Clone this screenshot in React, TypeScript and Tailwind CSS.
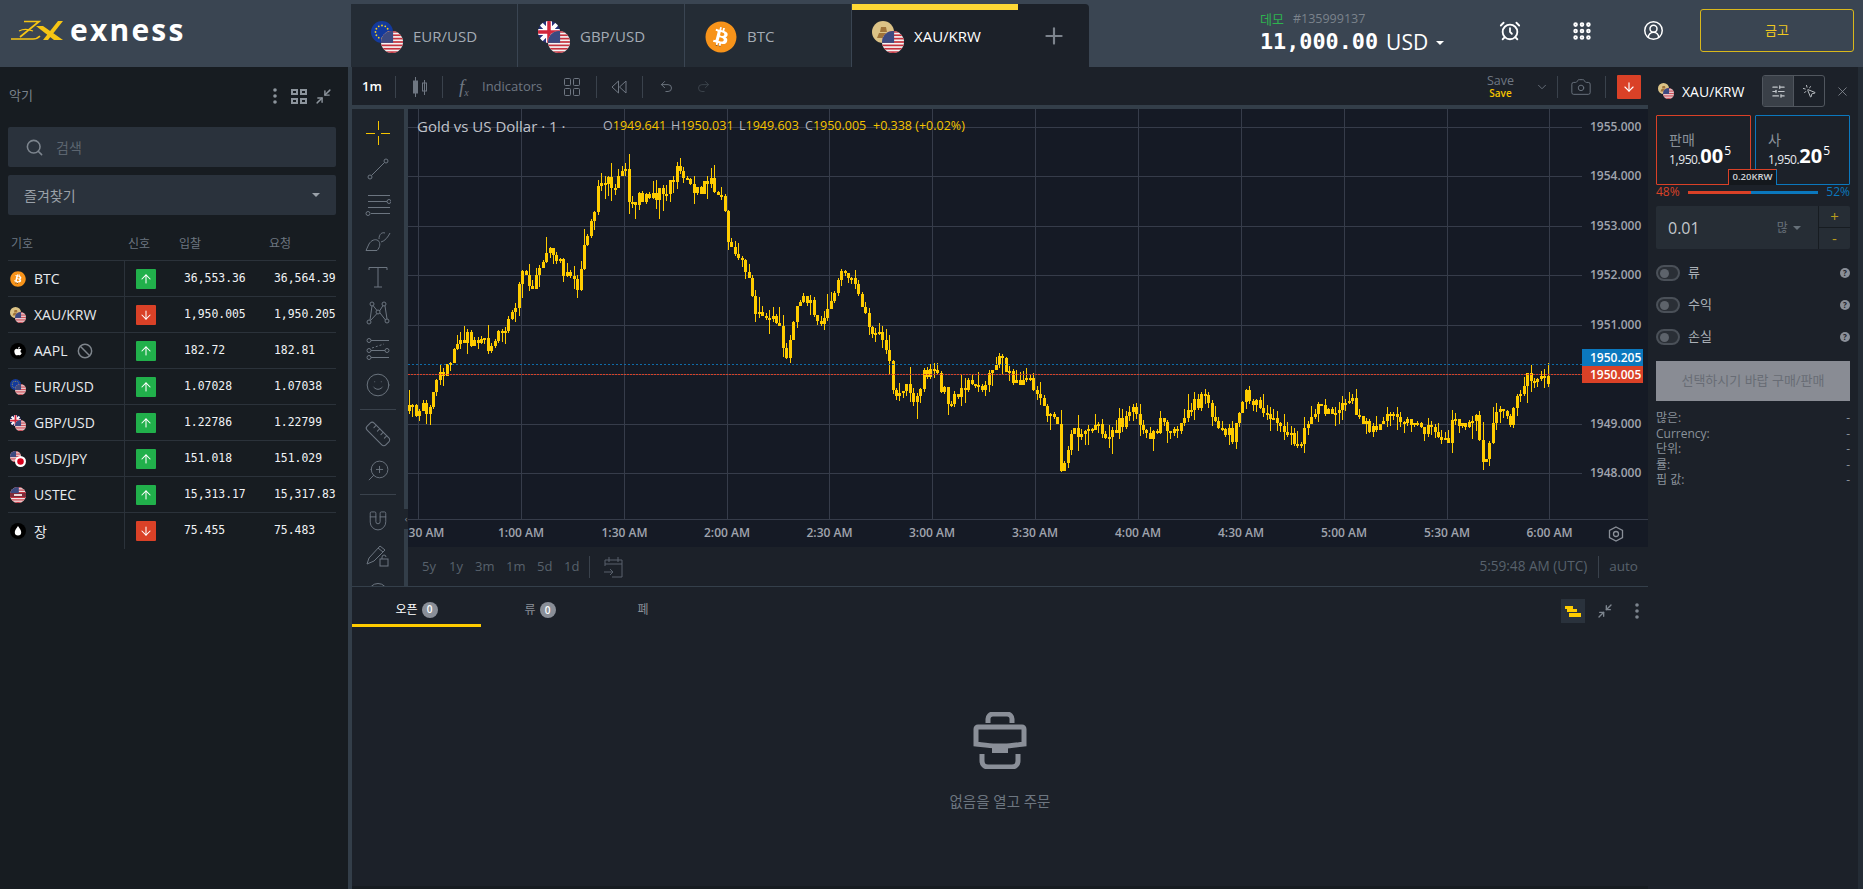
import React, { useId } from 'react';
import {
  AlarmClock, ArrowDown, ArrowUp, Ban, Camera, ChevronDown, CircleUserRound, Grip, Magnet, Minimize2,
  MousePointerClick, Plus, Redo2, Ruler, Search, SlidersHorizontal, Smile, Undo2, X, ZoomIn,
} from 'lucide-react';
import { FaApple, FaBitcoin } from 'react-icons/fa';

// candle path read off the picture, in page pixels
const toPage = (ox: number, oy: number, pts: number[][]) => pts.map(([x, y]) => [ox + x / 3, oy + y / 3]);
const waypoints = [
  ...toPage(350, 100, [
    [175, 935], [240, 925], [258, 850], [300, 790], [330, 710], [400, 730], [430, 755], [450, 690], [490, 650],
    [515, 490], [540, 570], [575, 490], [600, 450], [640, 510], [680, 570], [700, 460], [730, 350], [750, 235],
    [800, 250], [825, 210], [830, 300], [880, 290], [940, 280], [980, 210], [1040, 280], [1075, 230], [1110, 290],
    [1130, 340], [1130, 410], [1165, 470], [1200, 560], [1220, 650], [1270, 640], [1310, 760], [1330, 650],
    [1350, 610], [1380, 600], [1400, 670], [1440, 620], [1470, 530],
  ]),
  ...toPage(840, 100, [
    [10, 510], [40, 530], [60, 600], [90, 680], [130, 710], [150, 780], [160, 900], [200, 870], [230, 900],
    [250, 820], [290, 830], [330, 920], [380, 850], [420, 880], [450, 820], [480, 770], [510, 830], [570, 850],
    [600, 910], [650, 960], [660, 1140], [690, 1010], [750, 970], [810, 1010], [830, 980], [880, 940], [930, 1000],
    [960, 970], [1000, 1000], [1030, 940], [1095, 890], [1130, 980], [1180, 1010], [1210, 880], [1250, 900],
    [1290, 950], [1330, 980], [1380, 1030], [1410, 930],
  ]),
  ...toPage(1300, 340, [
    [20, 220], [50, 200], [90, 220], [150, 170], [170, 240], [220, 270], [280, 220], [330, 260], [400, 270],
    [445, 320], [460, 230], [500, 270], [530, 240], [550, 385], [565, 300], [600, 200], [630, 260], [660, 150],
    [680, 100], [700, 140], [740, 115],
  ]),
];

const lineAt = (x: number) => {
  for (let i = 1; i < waypoints.length; i++) {
    const [x0, y0] = waypoints[i - 1];
    const [x1, y1] = waypoints[i];
    if (x <= x1) return x1 === x0 ? y1 : y0 + ((y1 - y0) * (x - x0)) / (x1 - x0);
  }
  return waypoints[waypoints.length - 1][1];
};

const buildCandles = () => {
  let seed = 4211;
  const rand = () => {
    seed = (seed * 16807) % 2147483647;
    return seed / 2147483647;
  };
  let wicks = '';
  let filled = '';
  let hollow = '';
  let prev = lineAt(410);
  for (let i = 0; i < 333; i++) {
    const x = Math.round(409 + i * 3.43);
    const close = lineAt(409 + i * 3.43) + (rand() - 0.5) * 13;
    const top = Math.round(Math.min(prev, close));
    const bottom = Math.max(Math.round(Math.max(prev, close)), top + 2);
    const high = top - Math.round(rand() * rand() * 19);
    const low = bottom + Math.round(rand() * rand() * 19);
    wicks += `M${x + 0.5} ${high}V${low}`;
    if (close < prev) hollow += `M${x - 0.5} ${top + 0.5}h2V${bottom - 0.5}h-2z`;
    else filled += `M${x - 1} ${top}h3V${bottom}h-3z`;
    prev = close;
  }
  return { wicks, filled, hollow };
};
const candles = buildCandles();

const priceLines = [
  { y: 127, label: '1955.000' },
  { y: 176, label: '1954.000' },
  { y: 226, label: '1953.000' },
  { y: 275, label: '1952.000' },
  { y: 325, label: '1951.000' },
  { y: 424, label: '1949.000' },
  { y: 473, label: '1948.000' },
];
const timeLines = [
  { x: 418, label: '12:30 AM' },
  { x: 521, label: '1:00 AM' },
  { x: 624.5, label: '1:30 AM' },
  { x: 727, label: '2:00 AM' },
  { x: 829.5, label: '2:30 AM' },
  { x: 932, label: '3:00 AM' },
  { x: 1035, label: '3:30 AM' },
  { x: 1138, label: '4:00 AM' },
  { x: 1241, label: '4:30 AM' },
  { x: 1344, label: '5:00 AM' },
  { x: 1447, label: '5:30 AM' },
  { x: 1549.5, label: '6:00 AM' },
];

const Disc: React.FC<{ cx: number; cy: number; r: number; children: React.ReactNode }> = ({ cx, cy, r, children }) => {
  const id = 'c' + useId().replace(/[^a-zA-Z0-9]/g, '');
  return (
    <g>
      <clipPath id={id}>
        <circle cx={cx} cy={cy} r={r} />
      </clipPath>
      <g clipPath={`url(#${id})`}>{children}</g>
    </g>
  );
};

const UsFlag: React.FC<{ x: number; y: number; s: number }> = ({ x, y, s }) => (
  <Disc cx={x + s / 2} cy={y + s / 2} r={s / 2}>
    <rect x={x} y={y} width={s} height={s} fill="#f4f4f4" />
    {[0, 2, 4, 6, 8, 10, 12].map((n) => (
      <rect key={n} x={x} y={y + (n * s) / 13} width={s} height={s / 13} fill="#c6323e" />
    ))}
    <rect x={x} y={y} width={s * 0.55} height={s * 0.54} fill="#3c4a80" />
  </Disc>
);

const Back: React.FC<{ kind: string }> = ({ kind }) => {
  if (kind === 'eu')
    return (
      <Disc cx={11} cy={11} r={11}>
        <rect width="22" height="22" fill="#143a9c" />
        {[0, 1, 2, 3, 4, 5, 6, 7, 8, 9, 10, 11].map((n) => (
          <circle key={n} cx={11 + 6.5 * Math.cos((n * Math.PI) / 6)} cy={11 + 6.5 * Math.sin((n * Math.PI) / 6)} r="0.9" fill="#f4d020" />
        ))}
      </Disc>
    );
  if (kind === 'uk')
    return (
      <Disc cx={11} cy={11} r={11}>
        <rect width="22" height="22" fill="#27327a" />
        <path d="M0 0L22 22M22 0L0 22" stroke="#fff" strokeWidth="4" />
        <path d="M11 0V22M0 11H22" stroke="#fff" strokeWidth="6" />
        <path d="M11 0V22M0 11H22" stroke="#d2283c" strokeWidth="3.5" />
      </Disc>
    );
  if (kind === 'gold')
    return (
      <Disc cx={11} cy={11} r={11}>
        <rect width="22" height="22" fill="#dcc386" />
        <path d="M7 12h8l2 5H5zM9 6h5l1 5H8z" fill="#a0743a" />
      </Disc>
    );
  return <UsFlag x={0} y={0} s={22} />;
};

const PairIcon: React.FC<{ kind: string; size: number }> = ({ kind, size }) => (
  <svg width={size} height={size} viewBox="0 0 32 32" className="shrink-0">
    <Back kind={kind} />
    {kind === 'jp' ? (
      <g>
        <circle cx="21" cy="21" r="11" fill="#fff" />
        <circle cx="21" cy="21" r="6.5" fill="#d6001c" />
      </g>
    ) : (
      <UsFlag x={10} y={10} s={22} />
    )}
  </svg>
);

const SymbolIcon: React.FC<{ icon: string; size?: number }> = ({ icon, size = 16 }) => {
  if (icon === 'btc')
    return (
      <span className="relative flex shrink-0 items-center justify-center" style={{ width: size, height: size }}>
        <span className="absolute inset-[20%] rounded-full bg-white" />
        <FaBitcoin size={size} color="#f7931a" className="relative" />
      </span>
    );
  if (icon === 'apple')
    return (
      <span className="flex h-4 w-4 shrink-0 items-center justify-center rounded-full bg-black">
        <FaApple size={10} color="#fff" />
      </span>
    );
  if (icon === 'oil')
    return (
      <svg width="16" height="16" viewBox="0 0 16 16" className="shrink-0">
        <circle cx="8" cy="8" r="8" fill="#000" />
        <path d="M8 3c2 3 3.2 4.4 3.2 6.2A3.2 3.2 0 0 1 8 12.400a3.2 3.2 0 0 1-3.200-3.200C4.800 7.400 6 6 8 3z" fill="#fff" />
      </svg>
    );
  if (icon === 'ustec')
    return (
      <svg width="16" height="16" viewBox="0 0 16 16" className="shrink-0">
        <UsFlag x={0} y={0} s={16} />
        <rect x="0" y="6" width="16" height="4" fill="#7e2c3a" />
        <rect x="4" y="7" width="8" height="2" fill="#e8d8d8" />
      </svg>
    );
  return <PairIcon kind={icon} size={size} />;
};

const symbols = [
  { name: 'BTC', icon: 'btc', up: true, bid: '36,553.36', ask: '36,564.39' },
  { name: 'XAU/KRW', icon: 'gold', up: false, bid: '1,950.005', ask: '1,950.205' },
  { name: 'AAPL', icon: 'apple', up: true, bid: '182.72', ask: '182.81', blocked: true },
  { name: 'EUR/USD', icon: 'eu', up: true, bid: '1.07028', ask: '1.07038' },
  { name: 'GBP/USD', icon: 'uk', up: true, bid: '1.22786', ask: '1.22799' },
  { name: 'USD/JPY', icon: 'jp', up: true, bid: '151.018', ask: '151.029' },
  { name: 'USTEC', icon: 'ustec', up: true, bid: '15,313.17', ask: '15,317.83' },
  { name: '장', icon: 'oil', up: false, bid: '75.455', ask: '75.483' },
];

const tabs = [
  { name: 'EUR/USD', icon: 'eu' },
  { name: 'GBP/USD', icon: 'uk' },
  { name: 'BTC', icon: 'btc' },
  { name: 'XAU/KRW', icon: 'gold', active: true },
];

const Logo = () => (
  <div className="flex w-[351px] shrink-0 items-center pb-[7px] pl-[11px]">
    <svg width="52" height="20" viewBox="0 0 52 20" fill="#f6c514">
      <path d="M13 1.500H28L9 17" fill="none" stroke="#f6c514" strokeWidth="1.700" />
      <path d="M0 19H22c3 0 5-1 7-3" fill="none" stroke="#f6c514" strokeWidth="1.700" />
      <path d="M8 11c4-2 9-2 14 0" fill="none" stroke="#f6c514" strokeWidth="1.200" />
      <path d="M25 6h7l20 14h-9z" />
      <path d="M52 1h-5L32 20h5z" />
    </svg>
    <span className="ml-[7px] font-['Open_Sans'] text-[30px] leading-none font-bold tracking-[2.200px] text-white">exness</span>
  </div>
);

const Header = () => (
  <header className="flex h-[67px] shrink-0 bg-[#3a4552]">
    <Logo />
    <div className="flex pt-1">
      {tabs.map((tab) => (
        <div
          key={tab.name}
          className={
            tab.active
              ? 'flex w-[166px] items-center border-t-[6px] border-[#fdd835] bg-[#1c2129] pb-[4px] pl-5 text-white'
              : 'flex w-[167px] items-center border-r border-[#3a4552] bg-[#242c35] pt-[2px] pl-5 text-[#a3abb4]'
          }
        >
          <SymbolIcon icon={tab.icon} size={32} />
          <span className="ml-[10px] text-[15px]">{tab.name}</span>
        </div>
      ))}
      <div className="flex w-[71px] items-center justify-center rounded-tr bg-[#1c2129] text-[#7d848d]">
        <Plus size={26} strokeWidth={2} />
      </div>
    </div>
    <div className="ml-[171px] flex w-[200px] shrink-0 flex-col pt-[10px]">
      <div className="flex h-[18px] items-center text-[13px] leading-none">
        <span className="text-[#2eb24f]">데모</span>
        <span className="ml-[9px] text-[12.500px] text-[#7b838c]">#135999137</span>
      </div>
      <div className="mt-[1px] flex items-center text-white">
        <span className="font-['DejaVu_Sans_Mono'] text-[21.800px] leading-[26px] font-bold">11,000.00</span>
        <span className="ml-[8px] text-[21px] leading-[26px]">USD</span>
        <span className="mt-[1px] ml-[8px] border-x-[4px] border-t-[4px] border-x-transparent border-t-white" />
      </div>
    </div>
    <div className="ml-[39px] flex w-[165px] items-center justify-between pb-[6px] text-white">
      <AlarmClock size={22} strokeWidth={2} />
      <Grip size={22} strokeWidth={3} className="ml-[10px]" />
      <CircleUserRound size={21} strokeWidth={1.700} className="ml-[10px]" />
    </div>
    <button className="mt-[9px] ml-[36px] h-[43px] w-[154px] rounded-[3px] border border-[#d9b81c] text-[13px] text-[#f0c920]">금고</button>
  </header>
);

const Sidebar = () => (
  <aside className="flex w-[348px] shrink-0 flex-col bg-[#171c21] pr-3 pl-2">
    <div className="flex h-[60px] items-center justify-between pb-[2px]">
      <span className="ml-px text-[13px] text-[#7a828b]">악기</span>
      <div className="flex items-center text-[#8c949c]">
        <svg width="6" height="16" viewBox="0 0 6 16" fill="currentColor">
          <circle cx="3" cy="2" r="1.800" />
          <circle cx="3" cy="8" r="1.800" />
          <circle cx="3" cy="14" r="1.800" />
        </svg>
        <svg width="16" height="15" viewBox="0 0 16 15" fill="none" stroke="currentColor" strokeWidth="2" className="ml-[13px]">
          <rect x="1" y="1" width="5" height="4" />
          <rect x="10" y="1" width="5" height="4" />
          <rect x="1" y="10" width="5" height="4" />
          <rect x="10" y="10" width="5" height="4" />
        </svg>
        <Minimize2 size={17} strokeWidth={2} className="mr-[4px] ml-[8px]" />
      </div>
    </div>
    <div className="flex h-10 items-center rounded-[2px] bg-[#2a323c] pl-[17px] text-[#7d858e]">
      <Search size={19} strokeWidth={2} />
      <span className="ml-[12px] text-[14px] text-[#5c6570]">검색</span>
    </div>
    <div className="mt-2 flex h-10 items-center justify-between rounded-[2px] bg-[#2a323c] pr-[16px] pl-[16px] text-[14px] text-[#9aa1a9]">
      <span>즐겨찾기</span>
      <span className="border-x-[4px] border-t-[4px] border-x-transparent border-t-[#9aa1a9]" />
    </div>
    <div className="mt-[11px] flex h-[35px] items-center border-b border-[#2b323a] pt-[2px] text-[12px] text-[#6d7680]">
      <span className="ml-[3px] w-[117px]">기호</span>
      <span className="w-[51px]">신호</span>
      <span className="w-[90px]">입찰</span>
      <span>요청</span>
    </div>
    {symbols.map((row, i) => (
      <div key={row.name} className={i < symbols.length - 1 ? 'flex h-9 items-center border-b border-[#2b323a]' : 'flex h-9 items-center'}>
        <div className="flex h-full w-[117px] items-center gap-2 border-r border-[#2b323a] pl-[2px] text-[14px] text-[#e7eaee]">
          <SymbolIcon icon={row.icon} />
          <span>{row.name}</span>
          {row.blocked && <Ban size={16} strokeWidth={2.200} className="ml-[2px] text-[#7e858c]" />}
        </div>
        <div className="ml-[11px] w-[48px]">
          <span className={row.up ? 'flex h-5 w-5 items-center justify-center rounded-[1px] bg-[#21b04b] text-white' : 'flex h-5 w-5 items-center justify-center rounded-[1px] bg-[#da4127] text-white'}>
            {row.up ? <ArrowUp size={14} strokeWidth={1.800} /> : <ArrowDown size={14} strokeWidth={1.800} />}
          </span>
        </div>
        <span className="w-[90px] font-['DejaVu_Sans_Mono'] text-[11.400px] text-[#f1f3f5]">{row.bid}</span>
        <span className="font-['DejaVu_Sans_Mono'] text-[11.400px] text-[#f1f3f5]">{row.ask}</span>
      </div>
    ))}
  </aside>
);

const Divider: React.FC<{ className?: string }> = ({ className = '' }) => (
  <span className={`block h-[22px] w-px shrink-0 bg-[#3a424c] ${className}`} />
);

const ChartToolbar = () => (
  <div className="flex h-[38px] shrink-0 items-center bg-[#1c2129] pt-[1px] text-[#6f7782]">
    <span className="ml-[10px] w-[33px] text-[13px] font-semibold text-white">1m</span>
    <Divider />
    <svg width="16" height="22" viewBox="0 0 16 22" fill="none" stroke="currentColor" className="ml-[16px]">
      <path d="M3.500 1v20M12.500 4v15" />
      <rect x="1.500" y="5" width="4" height="12" fill="currentColor" />
      <rect x="10.500" y="7" width="4" height="8" />
    </svg>
    <Divider className="ml-[14px]" />
    <span className="ml-[16px] w-[16px] font-['Liberation_Serif'] text-[19px] leading-none italic">f<sub className="text-[10px]">x</sub></span>
    <span className="ml-[7px] w-[61px] text-[13px]">Indicators</span>
    <svg width="16" height="18" viewBox="0 0 16 18" fill="none" stroke="currentColor" className="ml-[21px]">
      <rect x="0.500" y="0.500" width="6" height="7" rx="1" />
      <rect x="9.500" y="0.500" width="6" height="7" rx="1" />
      <rect x="0.500" y="10.500" width="6" height="7" rx="1" />
      <rect x="9.500" y="10.500" width="6" height="7" rx="1" />
    </svg>
    <Divider className="ml-[16px]" />
    <svg width="16" height="14" viewBox="0 0 16 14" fill="none" stroke="currentColor" className="ml-[14px]">
      <path d="M7.500 1L1 7l6.500 6zM15 1L8.500 7l6.500 6z" />
    </svg>
    <Divider className="ml-[15px]" />
    <Undo2 size={15} strokeWidth={1.500} className="ml-[16px]" />
    <Redo2 size={15} strokeWidth={1.500} className="ml-[22px] text-[#3d444d]" />
    <div className="ml-auto flex h-full items-center">
      <div className="flex flex-col items-center">
        <span className="text-[12.500px] leading-[14px]">Save</span>
        <span className="text-[10px] leading-[11px] font-semibold text-[#f5c400]">Save</span>
      </div>
      <ChevronDown size={14} strokeWidth={1.500} className="ml-[21px]" />
      <Divider className="ml-[8px]" />
      <Camera size={22} strokeWidth={1} className="ml-[12px]" />
      <Divider className="ml-[13px]" />
      <span className="mr-[7px] ml-[11px] flex h-6 w-6 items-center justify-center rounded-[1px] bg-[#da4127] text-white">
        <ArrowDown size={14} strokeWidth={2} />
      </span>
    </div>
  </div>
);

const toolIcons: React.ReactNode[] = [
  <svg key="cross" width="24" height="24" viewBox="0 0 24 24" stroke="#f5c400" fill="none">
    <path d="M12.500 0v9M12.500 15v9M0 12.500h9M15 12.500h9" />
  </svg>,
  <svg key="line" width="22" height="22" viewBox="0 0 22 22" stroke="currentColor" fill="none">
    <circle cx="3" cy="19" r="2" />
    <circle cx="19" cy="3" r="2" />
    <path d="M4.500 17.500L17.500 4.500" />
  </svg>,
  <svg key="channel" width="26" height="22" viewBox="0 0 26 22" stroke="currentColor" fill="none">
    <path d="M3 1.500h22M3 7.500h20M3 13.500h22M6 19.500h19" />
    <circle cx="24" cy="7.500" r="2" fill="#1e242c" />
    <circle cx="3" cy="19.500" r="2" fill="#1e242c" />
  </svg>,
  <svg key="brush" width="26" height="22" viewBox="0 0 26 22" stroke="currentColor" fill="none">
    <path d="M1 20.500h11c3-3 4-8 1-10s-7 0-9 3.500zM14 9c0-5 3-7 6-6M16 12c4-1 7-5 9-9" />
  </svg>,
  <svg key="text" width="20" height="22" viewBox="0 0 20 22" stroke="currentColor" fill="none">
    <path d="M1 4V1.500h18V4M10 1.500v19.500M6 21h8" />
  </svg>,
  <svg key="pattern" width="24" height="24" viewBox="0 0 24 24" stroke="currentColor" fill="none">
    <circle cx="3" cy="21" r="2" />
    <circle cx="6" cy="3" r="2" />
    <circle cx="18" cy="3" r="2" />
    <circle cx="21" cy="20" r="2" />
    <circle cx="12" cy="11" r="2" />
    <path d="M4 19L6 5M4.500 19.500L11 12.500M7 4.500L11 9.500M17 4.500L13.500 10M19 5L21 18M14 12L19.500 19" />
  </svg>,
  <svg key="fib" width="24" height="22" viewBox="0 0 24 22" stroke="currentColor" fill="none">
    <circle cx="3" cy="2.500" r="2" />
    <circle cx="21" cy="12.500" r="2" />
    <circle cx="3" cy="12.500" r="2" />
    <circle cx="3" cy="19.500" r="2" />
    <path d="M5 2.500h18M5 12.500h14M5 19.500h18" />
    <path d="M6 10l12-4" strokeDasharray="2 2" />
  </svg>,
  <Smile key="smile" size={26} strokeWidth={0.900} />,
  <Ruler key="ruler" size={28} strokeWidth={0.900} />,
  <ZoomIn key="zoom" size={25} strokeWidth={0.900} className="-scale-x-100" />,
  <Magnet key="magnet" size={24} strokeWidth={0.900} className="rotate-[135deg]" />,
  <svg key="lock" width="24" height="24" viewBox="0 0 24 24" stroke="currentColor" fill="none">
    <path d="M1 21l2-6L14 3l5 4L8 18z M12 5l5 4" />
    <rect x="14" y="16" width="8" height="7" />
    <path d="M16 16v-2a2 2 0 0 1 4 0" />
  </svg>,
];

const ToolStrip = () => (
  <div className="flex w-[52px] shrink-0 flex-col items-center overflow-hidden bg-[#1e242c] pt-[6px] text-[#6c7580]">
    {toolIcons.map((icon, i) => (
      <React.Fragment key={i}>
        {(i === 8 || i === 10) && <span className="my-[6px] h-px w-9 shrink-0 bg-[#3a424c]" />}
        <span className="flex h-9 w-full shrink-0 items-center justify-center">{icon}</span>
      </React.Fragment>
    ))}
    <span className="mt-[10px] h-5 w-5 shrink-0 rounded-full border border-[#6c7580]" />
  </div>
);

const ChartCanvas = () => (
  <svg width="1240" height="438" viewBox="408 109 1240 438" className="block font-['Open_Sans']">
    <rect x="408" y="109" width="1240" height="438" fill="#151a25" />
    <g stroke="#363c4a" shapeRendering="crispEdges">
      {timeLines.map((t) => (
        <path key={t.x} d={`M${t.x} 109V519`} />
      ))}
      {priceLines.map((p) => (
        <path key={p.y} d={`M408 ${p.y}H1582`} />
      ))}
      <path d="M408 374H1582M408 519H1648" />
    </g>
    <g fill="#a0a4ae" fontSize="12" fontWeight="600">
      {timeLines.map((t) => (
        <text key={t.x} x={t.x} y="537" textAnchor="middle">{t.label}</text>
      ))}
      {priceLines.map((p) => (
        <text key={p.y} x="1590" y={p.y + 4}>{p.label}</text>
      ))}
    </g>
    <g shapeRendering="crispEdges" stroke="#ffcc00" fill="none">
      <path d={candles.wicks} />
      <path d={candles.hollow} />
      <path d={candles.filled} fill="#ffcc00" stroke="none" />
    </g>
    <path d="M408 364.500H1582" stroke="#0f6ba8" strokeDasharray="2 2" />
    <path d="M408 374.500H1582" stroke="#da4127" strokeDasharray="2 1" />
    <rect x="1582" y="349" width="61" height="17" fill="#0b78be" />
    <rect x="1582" y="366" width="61" height="17" fill="#da4127" />
    <g fill="#fff" fontSize="12" fontWeight="600">
      <text x="1590" y="362">1950.205</text>
      <text x="1590" y="379">1950.005</text>
    </g>
    <path d="M1616 527l6.500 3.500v7l-6.500 3.500-6.500-3.500v-7z" fill="none" stroke="#8a8f98" strokeWidth="1.300" />
    <circle cx="1616" cy="534" r="2.500" fill="none" stroke="#8a8f98" strokeWidth="1.300" />
  </svg>
);

const Chart = () => (
  <div className="flex w-[1240px] shrink-0 flex-col">
    <div className="relative">
      <ChartCanvas />
      <div className="absolute top-[7px] left-[9px] flex items-center text-[#c0c3cb]">
        <span className="w-[186px] text-[15px] leading-5">Gold vs US Dollar · 1 ·</span>
        <div className="flex text-[12.500px] leading-5 text-[#f5c400]">
          <span className="w-[68px]"><span className="text-[#b2b5be]">O</span>1949.641</span>
          <span className="w-[68px]"><span className="text-[#b2b5be]">H</span>1950.031</span>
          <span className="w-[66px]"><span className="text-[#b2b5be]">L</span>1949.603</span>
          <span className="w-[68px]"><span className="text-[#b2b5be]">C</span>1950.005</span>
          <span>+0.338 (+0.02%)</span>
        </div>
      </div>
      <span className="absolute top-[400px] -left-[4px] flex h-5 w-[4px] items-center justify-center bg-[#1e242c] text-[9px] text-[#8a8f98]">‹</span>
    </div>
    <div className="flex h-[39px] items-center bg-[#1c2129] pl-[14px] text-[13px] text-[#58616c]">
      <span className="w-[27px]">5y</span>
      <span className="w-[26px]">1y</span>
      <span className="w-[31px]">3m</span>
      <span className="w-[31px]">1m</span>
      <span className="w-[27px]">5d</span>
      <span className="w-[25px]">1d</span>
      <Divider />
      <svg width="19" height="22" viewBox="0 0 19 22" fill="none" stroke="currentColor" className="ml-[14px]">
        <path d="M1 10V4h17v17H8M1 8h17M5 1v5M14 1v5M0 16h9M6 13l3 3-3 3" />
      </svg>
      <span className="ml-auto text-[13.600px]">5:59:48 AM (UTC)</span>
      <Divider className="ml-[11px]" />
      <span className="mr-[10px] ml-[10px] text-[13.500px]">auto</span>
    </div>
  </div>
);

const CountBadge: React.FC<{ n: number }> = ({ n }) => (
  <span className="ml-[4px] flex h-4 w-4 items-center justify-center rounded-full bg-[#8a8f98] text-[10px] font-semibold text-white">{n}</span>
);

const OrdersPanel = () => (
  <div className="flex flex-1 flex-col border-t border-[#343f4a] bg-[#1c2129]">
    <div className="flex h-10 shrink-0 items-center text-[12px]">
      <div className="flex h-full w-[129px] items-center justify-center border-b-[3px] border-[#ffcc00] pt-[8px] text-white">
        오픈<CountBadge n={0} />
      </div>
      <div className="flex h-full w-[118px] items-center justify-center pt-[6px] text-[#8a8f98]">
        류<CountBadge n={0} />
      </div>
      <div className="flex h-full w-[88px] items-center justify-center pt-[6px] text-[#8a8f98]">폐</div>
      <div className="mt-[8px] mr-[8px] ml-auto flex items-center text-[#7d858e]">
        <span className="flex h-6 w-6 items-center justify-center bg-[#2a323c]">
          <svg width="16" height="11" viewBox="0 0 16 11" fill="#ffcc00">
            <rect x="0" y="0" width="8" height="3" />
            <rect x="2" y="3" width="10" height="3" />
            <rect x="4" y="7" width="12" height="4" />
          </svg>
        </span>
        <Minimize2 size={16} strokeWidth={2} className="ml-[12px]" />
        <svg width="6" height="16" viewBox="0 0 6 16" fill="currentColor" className="ml-[21px]">
          <circle cx="3" cy="2" r="1.800" />
          <circle cx="3" cy="8" r="1.800" />
          <circle cx="3" cy="14" r="1.800" />
        </svg>
      </div>
    </div>
    <div className="flex flex-1 flex-col items-center pt-[85px]">
      <svg width="54" height="57" viewBox="0 0 54 57" fill="none" stroke="#8a8f98" strokeWidth="5">
        <path d="M15 11V7a5 5 0 0 1 5-5h14a5 5 0 0 1 5 5v4" />
        <path d="M3 17a2 2 0 0 1 2-2h44a2 2 0 0 1 2 2v15c-8 1-14 2-20 2h-8c-6 0-12-1-20-2z" />
        <path d="M21 34v5h4v-3M29 36v3h4v-5" strokeWidth="4" />
        <path d="M9 42v7a6 6 0 0 0 6 6h24a6 6 0 0 0 6-6v-7" />
      </svg>
      <span className="mt-[22px] text-[14.500px] text-[#6d7680]">없음을 열고 주문</span>
    </div>
    <div className="h-[3px] shrink-0 bg-[#171c21]" />
  </div>
);

const HelpDot = () => (
  <span className="flex h-[10px] w-[10px] items-center justify-center rounded-full bg-[#8a8f98] text-[8px] leading-none font-bold text-[#1c2129]">?</span>
);

const QuoteBox: React.FC<{ label: string; small: string; big: string; color: string }> = ({ label, small, big, color }) => (
  <div className="h-[70px] w-[95px] rounded-[1px] border pl-3 pt-[15px]" style={{ borderColor: color }}>
    <div className="text-[14px] leading-[18px] text-[#8a919a]">{label}</div>
    <div className="-mt-[5px] flex items-start text-white">
      <span className="mt-[9px] text-[12px] leading-[14px] tracking-[-0.400px] text-[#e7eaee]">{small}</span>
      <span className="text-[20px] leading-[24px] font-bold">{big}</span>
      <span className="ml-px text-[12px] leading-[14px]">5</span>
    </div>
  </div>
);

const TradePanel = () => (
  <aside className="flex w-[210px] shrink-0 flex-col bg-[#1c2129] px-2">
    <div className="mt-2 flex h-8 items-center">
      <span className="ml-[2px]"><PairIcon kind="gold" size={16} /></span>
      <span className="ml-2 w-[80px] text-[14px] text-white">XAU/KRW</span>
      <div className="flex h-8 overflow-hidden rounded-[3px] border border-[#50565e] text-[#c3c7cc]">
        <span className="flex w-[31px] items-center justify-center border-r border-[#50565e] bg-[#3a4048]">
          <SlidersHorizontal size={15} strokeWidth={1.800} />
        </span>
        <span className="flex w-[30px] items-center justify-center">
          <MousePointerClick size={15} strokeWidth={1.500} />
        </span>
      </div>
      <X size={15} strokeWidth={1.300} className="ml-[10px] text-[#8a8f98]" />
    </div>
    <div className="relative mt-2 flex justify-between">
      <QuoteBox label="판매" small="1,950." big="00" color="#da4127" />
      <QuoteBox label="사" small="1,950." big="20" color="#0b78be" />
      <span
        className="absolute top-[54px] left-[72px] flex h-4 w-[49px] items-center justify-center border-x border-t bg-[#14181d] text-[9.500px] font-semibold text-[#d0d3d7]"
        style={{ borderColor: '#da4127 #0b78be #0b78be #da4127' }}
      >
        0.20KRW
      </span>
    </div>
    <div className="flex h-[14px] items-center justify-between text-[12px]">
      <span className="text-[#da4127]">48%</span>
      <div className="flex h-[3px] w-[130px]">
        <span className="w-[63px] bg-[#da4127]" />
        <span className="flex-1 bg-[#0b78be]" />
      </div>
      <span className="text-[#0b78be]">52%</span>
    </div>
    <div className="mt-[7px] flex h-[43px] overflow-hidden rounded-[2px] bg-[#262d35]">
      <div className="flex w-[163px] items-center border-r border-[#171c21] pl-3 text-[#c3c7cc]">
        <span className="text-[16px]">0.01</span>
        <span className="ml-[77px] text-[12px] text-[#667079]">많</span>
        <span className="mt-[1px] ml-[5px] border-x-[4px] border-t-[4px] border-x-transparent border-t-[#667079]" />
      </div>
      <div className="flex flex-1 flex-col text-[15px] leading-none text-[#b89b1d]">
        <span className="flex flex-1 items-center justify-center border-b border-[#171c21]">+</span>
        <span className="flex flex-1 items-center justify-center">-</span>
      </div>
    </div>
    <div className="mt-[8px] flex flex-col">
      {['류', '수익', '손실'].map((label) => (
        <div key={label} className="flex h-8 items-center text-[13px] text-[#aab0b7]">
          <span className="flex h-4 w-6 items-center rounded-full border-2 border-[#4a5058] bg-[#2a2f36] pl-[2px]">
            <span className="h-[9px] w-[9px] rounded-full bg-[#5d636b]" />
          </span>
          <span className="ml-2 flex-1">{label}</span>
          <HelpDot />
        </div>
      ))}
    </div>
    <button className="mt-[8px] h-10 w-full bg-[#898c94] text-[13px] text-[#686c75]">선택하시기 바랍 구매/판매</button>
    <div className="mt-[9px] flex flex-col text-[12px] leading-[15.500px] text-[#8a919a]">
      {['많은:', 'Currency:', '단위:', '률:', '핍 값:'].map((label) => (
        <div key={label} className="flex justify-between">
          <span>{label}</span>
          <span>-</span>
        </div>
      ))}
    </div>
  </aside>
);

export default function App() {
  return (
    <div className="flex h-[889px] w-[1863px] flex-col overflow-hidden bg-[#333e49] font-['Open_Sans','Noto_Sans_CJK_KR',sans-serif]">
      <Header />
      <div className="flex min-h-0 flex-1">
        <Sidebar />
        <div className="ml-1 flex w-[1296px] shrink-0 flex-col">
          <ChartToolbar />
          <div className="mt-1 flex h-[477px] shrink-0">
            <ToolStrip />
            <div className="ml-1">
              <Chart />
            </div>
          </div>
          <OrdersPanel />
        </div>
        <TradePanel />
        <div className="flex-1 bg-[#242c35]" />
      </div>
    </div>
  );
}
